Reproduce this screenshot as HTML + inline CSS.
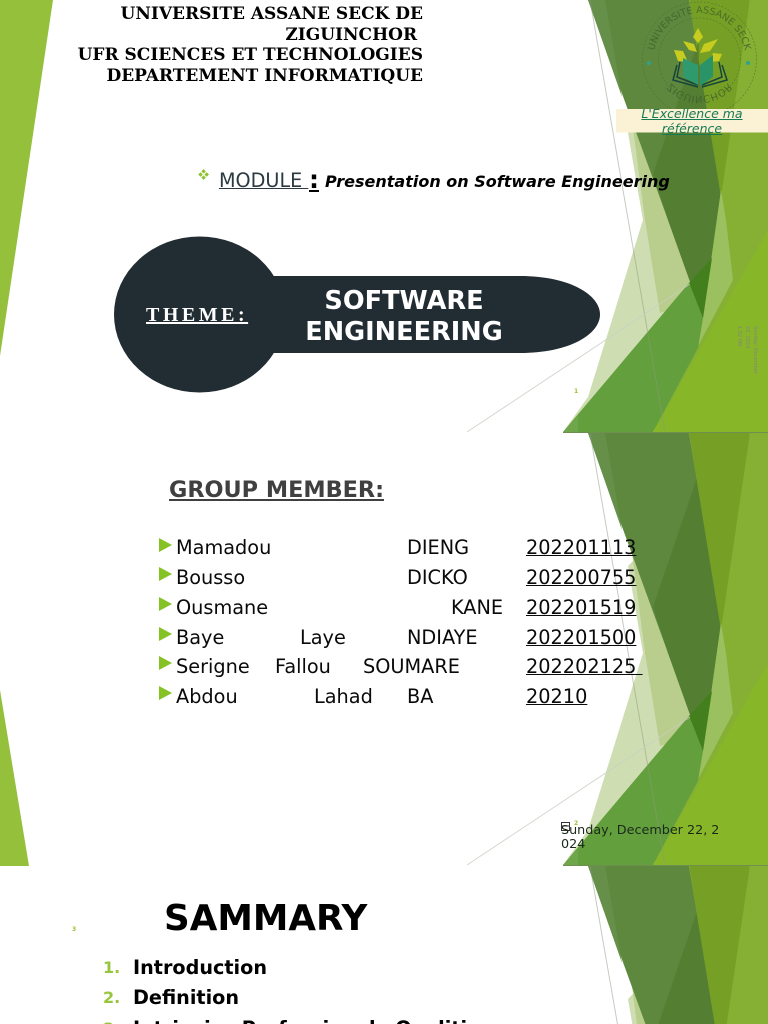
<!DOCTYPE html>
<html lang="fr"><head><meta charset="utf-8"><title>Software Engineering</title>
<style>
html,body{margin:0;padding:0;background:#fff;width:768px;height:1024px;overflow:hidden}
#p{position:relative;width:768px;height:1024px;overflow:hidden;background:#fff;font-family:"DejaVu Sans","Liberation Sans",sans-serif;color:#000}
#p svg.bg{position:absolute;left:0;top:0}
.t{position:absolute;white-space:pre;line-height:1}
.h{font-family:"DejaVu Serif","Liberation Serif",serif;font-weight:700;font-size:17px;right:345px}
.m{font-size:19.3px;color:#0a0a0a}
.u{text-decoration:underline}
.b{position:absolute;width:0;height:0;border-left:13px solid #84c225;border-top:7px solid transparent;border-bottom:7px solid transparent;left:159px}
</style></head><body><div id="p">
<svg class="bg" width="768" height="1024" viewBox="0 0 768 1024">
<defs><g id="f">
<polygon points="628,133 643,220 588,397 563,432 653,432 705,300 680,200 636,125" fill="#cfdeb2"/>
<polygon points="632,120 645,220 660,313 705,300 680,200" fill="#b9cd8c"/>
<polygon points="750,0 768,0 768,433 653,433 690,340 715,190" fill="#85b034"/>
<polygon points="588,0 689,0 721,190 703,318 668,220" fill="#5d883e"/>
<polygon points="588,0 605,0 622,97" fill="#669049"/>
<polygon points="697,45 653,174 668,220 703,318 721,190" fill="#547f32"/>
<polygon points="689,0 750,0 721,197" fill="#76a025"/>
<polygon points="721,190 703,318 696,350 733,280 726,220" fill="#9bc05f"/>
<polygon points="689,283 563,432 653,432 698,348 703,318" fill="#649f3d"/>
<polygon points="578,416 563,432 578,432" fill="#6fa54b"/>
<polygon points="712,258 689,283 703,318" fill="#437f1c"/>
<polygon points="768,230 653,432 768,432" fill="#87b628"/>
<line x1="590" y1="0" x2="665" y2="432" stroke="#8a9a80" stroke-opacity=".5" stroke-width="1"/>
<line x1="467" y1="432" x2="690" y2="284" stroke="#c8cfc2" stroke-opacity=".8" stroke-width="1"/>
<rect x="563" y="432" width="205" height="1" fill="#6f8f50"/>
</g></defs>
<use href="#f"/><use href="#f" y="433"/><use href="#f" y="866"/>
<polygon points="0,0 53,0 0,356" fill="#95c03c"/>
<polygon points="0,690 29,866 0,866" fill="#95c03c"/>

<!-- logo -->
<g>
<circle cx="699.500" cy="59" r="57" fill="none" stroke="#4e6f2e" stroke-opacity=".7" stroke-width=".7" stroke-dasharray="2 1.5"/>
<circle cx="699.500" cy="59" r="41" fill="none" stroke="#4e6f2e" stroke-opacity=".7" stroke-width=".7" stroke-dasharray="2 1.5"/>
<path id="ta" d="M653.500,59 A46,46 0 0 1 745.500,59" fill="none"/>
<text font-size="9.600" fill="#3f5f2a" fill-opacity=".8" text-anchor="middle"><textPath href="#ta" startOffset="50%">UNIVERSITE  ASSANE SECK</textPath></text>
<g transform="translate(0 118) scale(1 -1)">
<path id="tb" d="M662.500,59 A37,37 0 0 1 736.500,59" fill="none"/>
<text font-size="10" fill="#3f5f2a" fill-opacity=".8" text-anchor="middle"><textPath href="#tb" startOffset="50%">ZIGUINCHOR</textPath></text>
</g>
<circle cx="649" cy="63" r="2" fill="#2fa28a"/><circle cx="748" cy="63" r="2" fill="#2fa28a"/>
<path d="M698,28 l-5,9 5,6 5,-6z M683,41 l11,3 3,8 -8,-2z M718,39 l-14,5 -4,9 10,-2z M674,50 l9,1 5,11 -10,-1z M722,54 l-9,-1 -3,9 9,-1z" fill="#c8cc1e"/>
<path d="M698,44 v18" stroke="#5d7f2a" stroke-width="1.500"/>
<path d="M677,65 l-4,15 25,7 M680,62 l-3,15 21,8" fill="none" stroke="#17453c" stroke-width="1.500"/>
<path d="M722,65 l5,15 -25,7 M719,62 l3,15 -20,8" fill="none" stroke="#17453c" stroke-width="1.500"/>
<path d="M683,58 l15,7 v20 l-15,-8z" fill="#2f9a6d"/>
<path d="M713,55 l-13,10 v21 l13,-9z" fill="#2a9468"/>
</g>
<rect x="616" y="109" width="152" height="23.500" fill="#fbf1d5"/>

<!-- theme shape -->
<ellipse cx="199.500" cy="314.500" rx="85.500" ry="78" fill="#222d33"/>
<path d="M270,276 H520 C570,276 600,295 600,314.500 C600,334 570,353 520,353 H270Z" fill="#222d33"/>

<!-- module bullet -->
<g fill="#8cc22c"><rect x="202" y="169.800" width="3.200" height="3.200" transform="rotate(45 203.600 171.400)"/><rect x="202" y="176" width="3.200" height="3.200" transform="rotate(45 203.600 177.600)"/><rect x="198.900" y="172.900" width="3.200" height="3.200" transform="rotate(45 200.500 174.500)"/><rect x="205.100" y="172.900" width="3.200" height="3.200" transform="rotate(45 206.700 174.500)"/></g>
</svg>

<div class="t h" style="top:6px">UNIVERSITE ASSANE SECK DE</div>
<div class="t h" style="top:27px;right:345px">ZIGUINCHOR&nbsp;</div>
<div class="t h" style="top:47px">UFR SCIENCES ET TECHNOLOGIES</div>
<div class="t h" style="top:68px">DEPARTEMENT INFORMATIQUE</div>

<div class="t" style="left:616px;top:105.500px;width:152px;text-align:center;font-size:12.500px;line-height:15.500px;font-style:italic;color:#177a55;white-space:normal"><span class="u">L'Excellence ma référence</span></div>

<div class="t u" style="left:219px;top:171px;font-size:19.200px;color:#2b3a42">MODULE </div>
<div class="t u" style="left:309px;top:167px;font-size:25px;font-weight:700">:</div>
<div class="t" style="left:325px;top:174px;font-size:16px;font-weight:700;font-style:italic">Presentation on Software Engineering</div>

<div class="t u" style="left:146px;top:305px;font-family:'Liberation Serif','DejaVu Serif',serif;font-weight:700;font-size:20px;color:#fff;letter-spacing:3.500px">THEME:</div>
<div class="t" style="left:304px;top:285.500px;width:200px;text-align:center;font-size:25.600px;line-height:31px;font-weight:700;color:#fff;white-space:normal">SOFTWARE ENGINEERING</div>

<div class="t" style="left:574px;top:389px;font-size:6px;font-weight:700;color:#9ac22c">1</div>
<div class="t" style="left:759px;top:326px;font-size:5px;line-height:8px;color:#7f8a78;transform:rotate(90deg);transform-origin:0 0">Sunday, December<br>22, 2024<br>1:52 PM</div>

<div class="t u" style="left:169px;top:479px;font-size:22.350px;font-weight:700;color:#404040">GROUP MEMBER:</div>

<i class="b" style="top:538px"></i><i class="b" style="top:567px"></i><i class="b" style="top:597px"></i><i class="b" style="top:627px"></i><i class="b" style="top:656px"></i><i class="b" style="top:686px"></i>

<div class="t m" style="left:176px;top:538px">Mamadou</div><div class="t m" style="left:407px;top:538px">DIENG</div><div class="t m u" style="left:526px;top:538px">202201113</div>
<div class="t m" style="left:176px;top:568px">Bousso</div><div class="t m" style="left:407px;top:568px">DICKO</div><div class="t m u" style="left:526px;top:568px">202200755</div>
<div class="t m" style="left:176px;top:598px">Ousmane</div><div class="t m" style="left:451px;top:598px">KANE</div><div class="t m u" style="left:526px;top:598px">202201519</div>
<div class="t m" style="left:176px;top:628px">Baye</div><div class="t m" style="left:300px;top:628px">Laye</div><div class="t m" style="left:407px;top:628px">NDIAYE</div><div class="t m u" style="left:526px;top:628px">202201500</div>
<div class="t m" style="left:176px;top:657px">Serigne</div><div class="t m" style="left:275px;top:657px">Fallou</div><div class="t m" style="left:363px;top:657px">SOUMARE</div><div class="t m u" style="left:526px;top:657px">202202125 </div>
<div class="t m" style="left:176px;top:686.500px">Abdou</div><div class="t m" style="left:314px;top:686.500px">Lahad</div><div class="t m" style="left:407px;top:686.500px">BA</div><div class="t m u" style="left:526px;top:686.500px">20210</div>

<div class="t" style="left:574px;top:821px;font-size:6px;font-weight:700;color:#9ac22c">2</div>
<svg class="bg" style="left:561px;top:822px" width="12" height="12"><rect x=".5" y=".5" width="8" height="8" fill="none" stroke="#333" stroke-width="1"/><path d="M1,4 h7" stroke="#333"/></svg>
<div class="t" style="left:561px;top:824px;font-size:12.750px;line-height:13.500px;color:#1a2a1a">Sunday, December 22, 2<br>024</div>

<div class="t" style="left:72px;top:926.500px;font-size:6px;font-weight:700;color:#9ac22c">3</div>
<div class="t" style="left:164px;top:901px;font-size:35.700px;font-weight:700">SAMMARY</div>
<div class="t" style="left:103px;top:960px;font-size:16px;font-weight:700;color:#96c63c">1.</div><div class="t" style="left:133px;top:957.500px;font-size:19.200px;font-weight:700">Introduction</div>
<div class="t" style="left:103px;top:990px;font-size:16px;font-weight:700;color:#96c63c">2.</div><div class="t" style="left:133px;top:987.500px;font-size:19.200px;font-weight:700">Definition</div>
<div style="position:absolute;left:0;top:1000px;width:768px;height:24px;overflow:hidden"><div class="t" style="left:103px;top:21px;font-size:16px;font-weight:700;color:#96c63c">3.</div><div class="t" style="left:133px;top:19px;font-size:19.200px;font-weight:700;word-spacing:13px">Intrinsic Professional Qualities</div></div>
</div></body></html>
